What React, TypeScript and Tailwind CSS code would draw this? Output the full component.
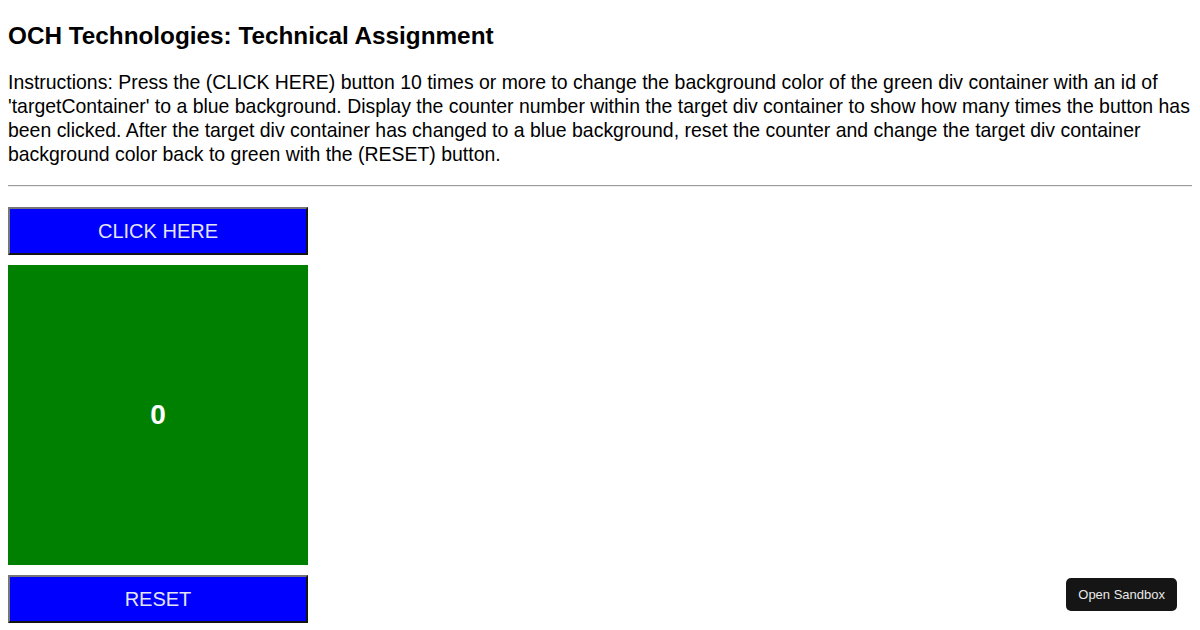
import { useState } from "react";

const btn =
  "block w-[300px] h-[48px] bg-[#0000ff] text-[20px] text-[#e4e4f2] border-2 border-t-[#767676] border-l-[#767676] border-b-[#141414] border-r-[#141414]";

export default function App() {
  const [count, setCount] = useState(0);
  const isBlue = count >= 10;

  return (
    <div className="min-h-[630px] bg-white px-2 pt-[22px] text-black font-['Liberation_Sans',Arial,sans-serif]">
      <h2 className="text-[24.3px] leading-[28px] font-bold">OCH Technologies: Technical Assignment</h2>
      <p className="mt-[20px] text-[19.45px] leading-[24px]">
        Instructions: Press the (CLICK HERE) button 10 times or more to change the background color of the green div
        container with an id of 'targetContainer' to a blue background. Display the counter number within the target
        div container to show how many times the button has been clicked. After the target div container has changed
        to a blue background, reset the counter and change the target div container background color back to green
        with the (RESET) button.
      </p>
      <hr className="mt-[19px] border-0 border-t border-b border-t-[#9a9a9a] border-b-[#eeeeee]" />

      <button type="button" className={`${btn} mt-[20px]`} onClick={() => setCount((c) => c + 1)}>
        CLICK HERE
      </button>

      <div
        id="targetContainer"
        className={`mt-[10px] flex h-[300px] w-[300px] items-center justify-center ${
          isBlue ? "bg-[#0000ff]" : "bg-[#008000]"
        }`}
      >
        <span className="text-[28px] font-bold text-white">{count}</span>
      </div>

      <button type="button" className={`${btn} mt-[10px]`} onClick={() => setCount(0)}>
        RESET
      </button>

      <div className="fixed bottom-[19px] right-[23px] flex h-[33px] items-center rounded-[5px] bg-[#151515] px-[12px] text-[13px] text-[#e8e8e8] font-['Liberation_Sans',Arial,sans-serif]">
        Open Sandbox
      </div>
    </div>
  );
}
